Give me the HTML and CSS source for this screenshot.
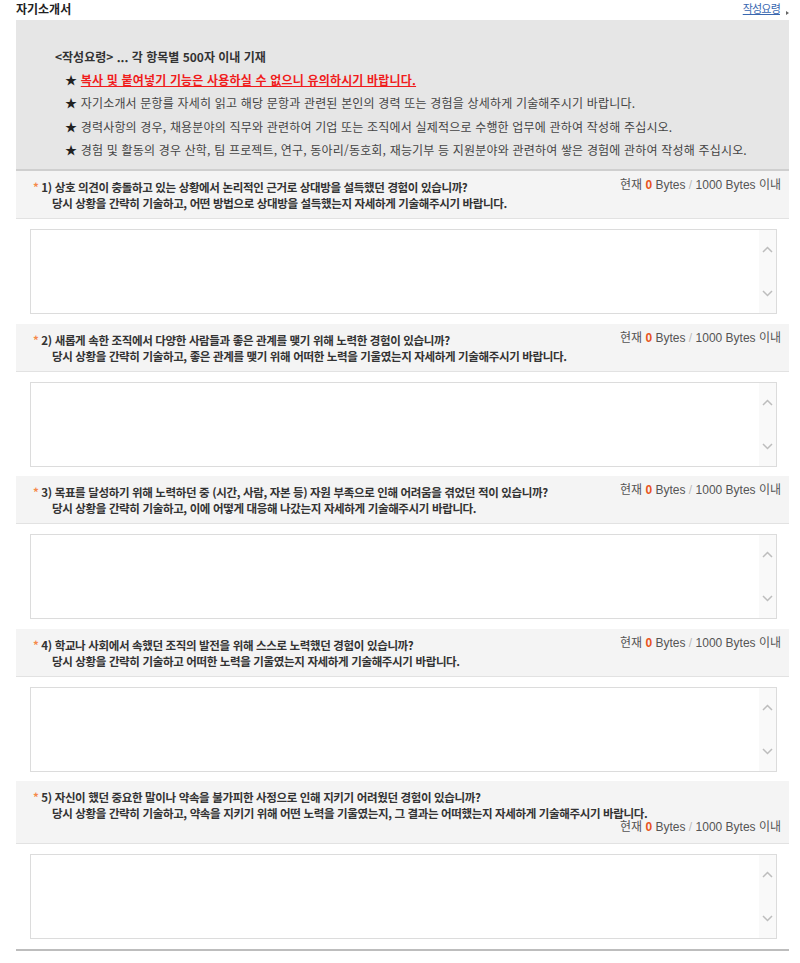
FILE: index.html
```html
<!DOCTYPE html>
<html lang="ko">
<head>
<meta charset="utf-8">
<title>자기소개서</title>
<link rel="stylesheet" href="styles.css">
</head>
<body>
<div class="page">
  <div class="top">
    <h2 class="title">자기소개서</h2>
    <a class="guide-link" href="#">작성요령</a><span class="tri"></span>
  </div>

  <div class="guide">
    <p class="guide-title">&lt;작성요령&gt; ... 각 항목별 500자 이내 기재</p>
    <ul class="guide-list">
      <li><span class="star">★</span> <span class="warn">복사 및 붙여넣기 기능은 사용하실 수 없으니 유의하시기 바랍니다.</span></li>
      <li><span class="star">★</span> 자기소개서 문항를 자세히 읽고 해당 문항과 관련된 본인의 경력 또는 경험을 상세하게 기술해주시기 바랍니다.</li>
      <li><span class="star">★</span> 경력사항의 경우, 채용분야의 직무와 관련하여 기업 또는 조직에서 실제적으로 수행한 업무에 관하여 작성해 주십시오.</li>
      <li><span class="star">★</span> 경험 및 활동의 경우 산학, 팀 프로젝트, 연구, 동아리/동호회, 재능기부 등 지원분야와 관련하여 쌓은 경험에 관하여 작성해 주십시오.</li>
    </ul>
  </div>

  <div class="q">
    <div class="qhead">
      <div class="qtext">
        <div class="l1"><span class="req">*</span> 1) 상호 의견이 충돌하고 있는 상황에서 논리적인 근거로 상대방을 설득했던 경험이 있습니까?</div>
        <div class="l2">당시 상황을 간략히 기술하고, 어떤 방법으로 상대방을 설득했는지 자세하게 기술해주시기 바랍니다.</div>
      </div>
      <div class="count">현재 <b>0</b> Bytes <i>/</i> 1000 Bytes 이내</div>
    </div>
    <div class="box"><textarea></textarea><div class="sb"><svg width="11" height="7" viewBox="0 0 11 7"><path d="M1 6L5.5 1.5L10 6" fill="none" stroke="#bdbdbd" stroke-width="1.5"/></svg><svg width="11" height="7" viewBox="0 0 11 7"><path d="M1 1L5.5 5.5L10 1" fill="none" stroke="#bdbdbd" stroke-width="1.5"/></svg></div></div>
  </div>

  <div class="q">
    <div class="qhead">
      <div class="qtext">
        <div class="l1"><span class="req">*</span> 2) 새롭게 속한 조직에서 다양한 사람들과 좋은 관계를 맺기 위해 노력한 경험이 있습니까?</div>
        <div class="l2">당시 상황을 간략히 기술하고, 좋은 관계를 맺기 위해 어떠한 노력을 기울였는지 자세하게 기술해주시기 바랍니다.</div>
      </div>
      <div class="count">현재 <b>0</b> Bytes <i>/</i> 1000 Bytes 이내</div>
    </div>
    <div class="box"><textarea></textarea><div class="sb"><svg width="11" height="7" viewBox="0 0 11 7"><path d="M1 6L5.5 1.5L10 6" fill="none" stroke="#bdbdbd" stroke-width="1.5"/></svg><svg width="11" height="7" viewBox="0 0 11 7"><path d="M1 1L5.5 5.5L10 1" fill="none" stroke="#bdbdbd" stroke-width="1.5"/></svg></div></div>
  </div>

  <div class="q">
    <div class="qhead">
      <div class="qtext">
        <div class="l1"><span class="req">*</span> 3) 목표를 달성하기 위해 노력하던 중 (시간, 사람, 자본 등) 자원 부족으로 인해 어려움을 겪었던 적이 있습니까?</div>
        <div class="l2">당시 상황을 간략히 기술하고, 이에 어떻게 대응해 나갔는지 자세하게 기술해주시기 바랍니다.</div>
      </div>
      <div class="count">현재 <b>0</b> Bytes <i>/</i> 1000 Bytes 이내</div>
    </div>
    <div class="box"><textarea></textarea><div class="sb"><svg width="11" height="7" viewBox="0 0 11 7"><path d="M1 6L5.5 1.5L10 6" fill="none" stroke="#bdbdbd" stroke-width="1.5"/></svg><svg width="11" height="7" viewBox="0 0 11 7"><path d="M1 1L5.5 5.5L10 1" fill="none" stroke="#bdbdbd" stroke-width="1.5"/></svg></div></div>
  </div>

  <div class="q">
    <div class="qhead">
      <div class="qtext">
        <div class="l1"><span class="req">*</span> 4) 학교나 사회에서 속했던 조직의 발전을 위해 스스로 노력했던 경험이 있습니까?</div>
        <div class="l2">당시 상황을 간략히 기술하고 어떠한 노력을 기울였는지 자세하게 기술해주시기 바랍니다.</div>
      </div>
      <div class="count">현재 <b>0</b> Bytes <i>/</i> 1000 Bytes 이내</div>
    </div>
    <div class="box"><textarea></textarea><div class="sb"><svg width="11" height="7" viewBox="0 0 11 7"><path d="M1 6L5.5 1.5L10 6" fill="none" stroke="#bdbdbd" stroke-width="1.5"/></svg><svg width="11" height="7" viewBox="0 0 11 7"><path d="M1 1L5.5 5.5L10 1" fill="none" stroke="#bdbdbd" stroke-width="1.5"/></svg></div></div>
  </div>

  <div class="q last">
    <div class="qhead stacked">
      <div class="qtext">
        <div class="l1"><span class="req">*</span> 5) 자신이 했던 중요한 말이나 약속을 불가피한 사정으로 인해 지키기 어려웠던 경험이 있습니까?</div>
        <div class="l2">당시 상황을 간략히 기술하고, 약속을 지키기 위해 어떤 노력을 기울였는지, 그 결과는 어떠했는지 자세하게 기술해주시기 바랍니다.</div>
      </div>
      <div class="count">현재 <b>0</b> Bytes <i>/</i> 1000 Bytes 이내</div>
    </div>
    <div class="box"><textarea></textarea><div class="sb"><svg width="11" height="7" viewBox="0 0 11 7"><path d="M1 6L5.5 1.5L10 6" fill="none" stroke="#bdbdbd" stroke-width="1.5"/></svg><svg width="11" height="7" viewBox="0 0 11 7"><path d="M1 1L5.5 5.5L10 1" fill="none" stroke="#bdbdbd" stroke-width="1.5"/></svg></div></div>
  </div>
</div>
</body>
</html>
```

FILE: styles.css
```css
html, body {
  margin: 0;
  padding: 0;
  background: #fff;
}
body {
  font-family: "Noto Sans CJK KR", "Liberation Sans", sans-serif;
  color: #333;
  font-size: 12px;
}
.page {
  width: 773px;
  margin-left: 16px;
}
.top {
  display: flex;
  align-items: flex-start;
  height: 20px;
}
.title {
  margin: 0;
  flex: 1;
  font-size: 12px;
  font-weight: bold;
  color: #222;
  line-height: 18px;
}
.guide-link {
  color: #3a68b0;
  font-size: 11px;
  letter-spacing: -0.8px;
  line-height: 14px;
  margin-top: 1px;
  text-decoration: underline;
}
.tri {
  width: 0;
  height: 0;
  border-left: 3px solid #666;
  border-top: 2px solid transparent;
  border-bottom: 2px solid transparent;
  margin: 11px 0 0 6px;
}
.guide {
  background: #e6e6e6;
  border-bottom: 2px solid #cfcfcf;
  padding: 25px 0 8px 39px;
}
.guide-title {
  margin: 0;
  font-weight: bold;
  line-height: 23px;
  color: #333;
}
.guide-list {
  list-style: none;
  margin: 0;
  padding: 0 0 0 10px;
  letter-spacing: 0.18px;
}
.guide-list li {
  line-height: 23.3px;
  color: #444;
}
.star {
  color: #222;
}
.warn {
  color: #f01c1c;
  font-weight: bold;
  text-decoration: underline;
}
.q {
  padding-bottom: 9.5px;
}
.qhead {
  display: flex;
  justify-content: space-between;
  background: #f4f4f4;
  border-bottom: 1px solid #e2e2e2;
  padding: 8px 8px 7px 17px;
  height: 32px;
}
.qhead.stacked {
  display: block;
  height: auto;
  padding-bottom: 9px;
}
.qhead.stacked .count {
  text-align: right;
  line-height: 14px;
  margin-top: -1px;
  padding-top: 0;
}
.qtext {
  font-weight: bold;
  color: #333;
  font-size: 11.5px;
  letter-spacing: -0.35px;
  line-height: 16px;
}
.req {
  color: #f58a4b;
}
.l2 {
  padding-left: 19px;
}
.count {
  font-family: "Liberation Sans", "Noto Sans CJK KR", sans-serif;
  font-size: 12px;
  color: #555;
  line-height: 8px;
  white-space: nowrap;
  padding-top: 2px;
}
.count b {
  color: #e8541c;
}
.count i {
  font-style: normal;
  color: #bbb;
}
.box {
  display: flex;
  margin: 10px 12px 0 14px;
  height: 83px;
  border: 1px solid #dcdcdc;
  background: #fff;
}
.box textarea {
  flex: 1;
  border: 0;
  outline: 0;
  resize: none;
  padding: 0;
  margin: 0;
}
.sb {
  width: 17px;
  background: #f9f9f9;
  display: flex;
  flex-direction: column;
  justify-content: space-between;
  align-items: center;
  padding: 16px 0 16px;
}
.sb svg {
  display: block;
}
.q.last {
  border-bottom: 2px solid #bdbdbd;
  padding-bottom: 10px;
}
```
